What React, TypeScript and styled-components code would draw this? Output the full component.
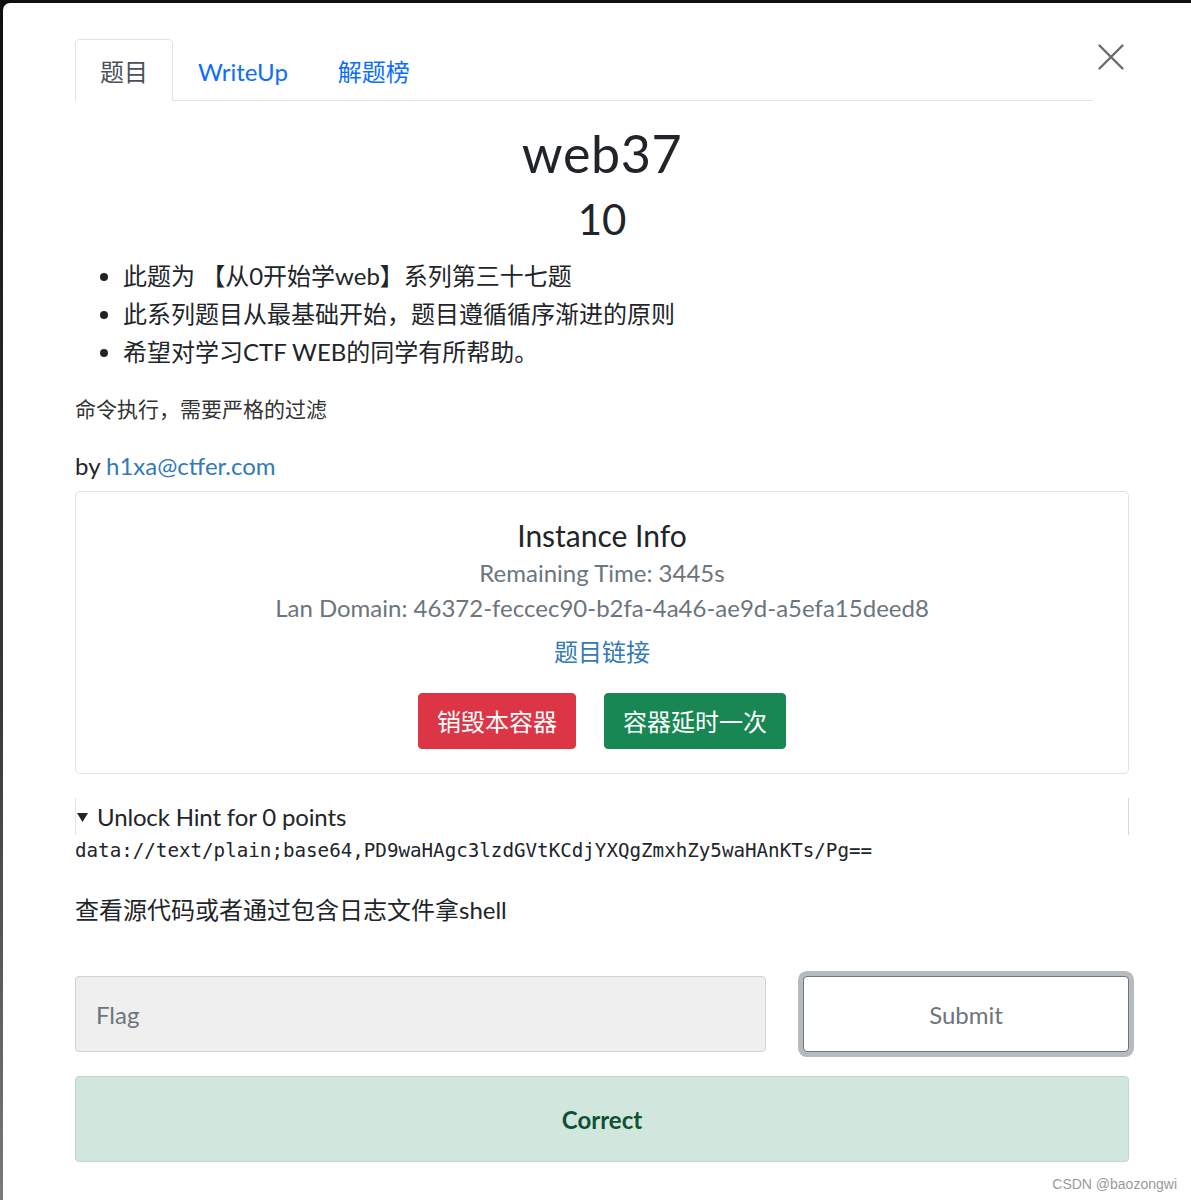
import React from "react";
import styled, { createGlobalStyle } from "styled-components";

const Global = createGlobalStyle`
  html, body { margin: 0; padding: 0; }
  body {
    background: linear-gradient(180deg, #0f0f0f 0%, #3a3a3a 60%, #7a7a7a 100%);
    font-family: Lato, "Noto Sans CJK SC", sans-serif;
    color: #212529;
  }
`;

const Modal = styled.div`
  margin: 3px 0 0 3px;
  min-height: 1197px;
  box-sizing: border-box;
  background: #fff;
  border-top-left-radius: 7px;
  padding: 36px 62px 0 72px;
  position: relative;
`;

const Header = styled.div`
  display: flex;
  align-items: flex-start;
`;

const Tabs = styled.ul`
  flex: 1;
  display: flex;
  list-style: none;
  margin: 0;
  padding: 0;
  border-bottom: 1px solid #dee2e6;
`;

const Tab = styled.li<{ $active?: boolean }>`
  padding: 14px 24px 10px;
  font-size: 24px;
  line-height: 36px;
  border: 1px solid transparent;
  border-radius: 5px 5px 0 0;
  margin-bottom: -1px;
  color: ${(p) => (p.$active ? "#495057" : "#0d6efd")};
  ${(p) => p.$active && `border-color: #dee2e6 #dee2e6 #fff; background: #fff;`}
`;

const Close = styled.button`
  width: 36px;
  height: 36px;
  margin-top: 0;
  padding: 0;
  border: none;
  background: none;
  display: flex;
  align-items: center;
  justify-content: center;
`;

const Title = styled.h1`
  margin: 21px 0 0;
  text-align: center;
  font-size: 52px;
  line-height: 62px;
  font-weight: 400;
  letter-spacing: 0.6px;
  color: #212529;
`;

const Value = styled.h2`
  margin: 10px 0 0;
  text-align: center;
  font-size: 42px;
  line-height: 50px;
  font-weight: 400;
  color: #212529;
`;

const List = styled.ul`
  margin: 13px 0 0;
  padding-left: 48px;
  font-size: 24px;
  line-height: 38px;
`;

const Note = styled.p`
  margin: 24px 0 0;
  font-family: "DejaVu Serif", "Noto Sans CJK SC", serif;
  font-size: 21px;
  line-height: 30px;
  color: #333;
`;

const Author = styled.p`
  margin: 23px 0 0;
  font-size: 24px;
  line-height: 36px;
`;

const Link = styled.a`
  color: #337ab7;
  text-decoration: none;
`;

const Card = styled.div`
  margin-top: 7px;
  border: 1px solid #dfe1e4;
  border-radius: 5px;
  padding: 25px 16px 24px;
  display: flex;
  flex-direction: column;
  align-items: center;
`;

const CardTitle = styled.div`
  font-size: 30px;
  line-height: 36px;
  color: #212529;
`;

const Muted = styled.div<{ $mt: number }>`
  margin-top: ${(p) => p.$mt}px;
  font-size: 24px;
  line-height: 34px;
  color: #6c757d;
`;

const CardLink = styled(Link)`
  margin-top: 10px;
  font-size: 24px;
  line-height: 34px;
`;

const Buttons = styled.div`
  margin-top: 24px;
  display: flex;
  gap: 28px;
`;

const Btn = styled.button<{ $bg: string }>`
  font-family: Lato, "Noto Sans CJK SC", sans-serif;
  font-size: 24px;
  line-height: 36px;
  padding: 10px 18px 8px;
  border: 1px solid ${(p) => p.$bg};
  border-radius: 4px;
  background: ${(p) => p.$bg};
  color: #fff;
`;

const Summary = styled.div`
  margin-top: 24px;
  border-left: 1px solid #e3e3e3;
  border-right: 1px solid #d6d6d6;
  font-size: 24px;
  line-height: 37px;
  display: flex;
  align-items: center;
  gap: 8px;
  letter-spacing: -0.15px;
`;

const Code = styled.div`
  margin-top: 4px;
  font-family: "DejaVu Sans Mono", monospace;
  font-size: 19.2px;
  line-height: 24px;
  color: #212529;
`;

const Hint = styled.p`
  margin: 29px 0 0;
  font-size: 24px;
  line-height: 36px;
`;

const FormRow = styled.div`
  margin-top: 48px;
  display: grid;
  grid-template-columns: 691px 1fr;
  column-gap: 37px;
  margin-right: -5px;
`;

const Input = styled.input`
  box-sizing: border-box;
  height: 76px;
  padding: 0 20px;
  font-family: Lato, sans-serif;
  font-size: 24px;
  background: #efefef;
  border: 1px solid #ced4da;
  border-radius: 4px;
  color: #495057;
  &::placeholder { color: #6c757d; }
`;

const Submit = styled.button`
  box-sizing: border-box;
  height: 76px;
  margin-right: 5px;
  font-family: Lato, sans-serif;
  font-size: 24px;
  color: #6c757d;
  background: #fff;
  border: 1px solid #6c757d;
  border-radius: 4px;
  box-shadow: 0 0 0 5px #b6bbc0;
`;

const Alert = styled.div`
  margin-top: 24px;
  height: 86px;
  box-sizing: border-box;
  display: flex;
  align-items: center;
  justify-content: center;
  background: #d1e7dd;
  border: 1px solid #badbcc;
  border-radius: 4px;
  color: #0f5132;
  font-size: 24px;
  font-weight: 700;
`;

const Watermark = styled.div`
  position: absolute;
  right: 14px;
  bottom: 8px;
  font-family: "Liberation Sans", Arial, sans-serif;
  font-size: 14px;
  color: #9a9a9a;
`;

export default function App() {
  return (
    <>
      <Global />
      <Modal>
        <Header>
          <Tabs>
            <Tab $active>题目</Tab>
            <Tab>WriteUp</Tab>
            <Tab>解题榜</Tab>
          </Tabs>
          <Close aria-label="close">
            <svg width="28" height="28" viewBox="0 0 28 28">
              <path d="M2.5 2.5 L25.5 25.5 M25.5 2.5 L2.5 25.5" stroke="#6b6b6b" strokeWidth="2.4" strokeLinecap="round" />
            </svg>
          </Close>
        </Header>
        <Title>web37</Title>
        <Value>10</Value>
        <List>
          <li>此题为 【从0开始学web】系列第三十七题</li>
          <li>此系列题目从最基础开始，题目遵循循序渐进的原则</li>
          <li>希望对学习CTF WEB的同学有所帮助。</li>
        </List>
        <Note>命令执行，需要严格的过滤</Note>
        <Author>
          by <Link href="#">h1xa@ctfer.com</Link>
        </Author>
        <Card>
          <CardTitle>Instance Info</CardTitle>
          <Muted $mt={3}>Remaining Time: 3445s</Muted>
          <Muted $mt={1}>Lan Domain: 46372-feccec90-b2fa-4a46-ae9d-a5efa15deed8</Muted>
          <CardLink href="#">题目链接</CardLink>
          <Buttons>
            <Btn $bg="#dc3545">销毁本容器</Btn>
            <Btn $bg="#198754">容器延时一次</Btn>
          </Buttons>
        </Card>
        <Summary>
          <svg width="13" height="12" viewBox="0 0 13 12">
            <path d="M1 2 L12 2 L6.5 11 Z" fill="#212529" />
          </svg>
          <span>Unlock Hint for 0 points</span>
        </Summary>
        <Code>data://text/plain;base64,PD9waHAgc3lzdGVtKCdjYXQgZmxhZy5waHAnKTs/Pg==</Code>
        <Hint>查看源代码或者通过包含日志文件拿shell</Hint>
        <FormRow>
          <Input placeholder="Flag" />
          <Submit>Submit</Submit>
        </FormRow>
        <Alert>Correct</Alert>
        <Watermark>CSDN @baozongwi</Watermark>
      </Modal>
    </>
  );
}
